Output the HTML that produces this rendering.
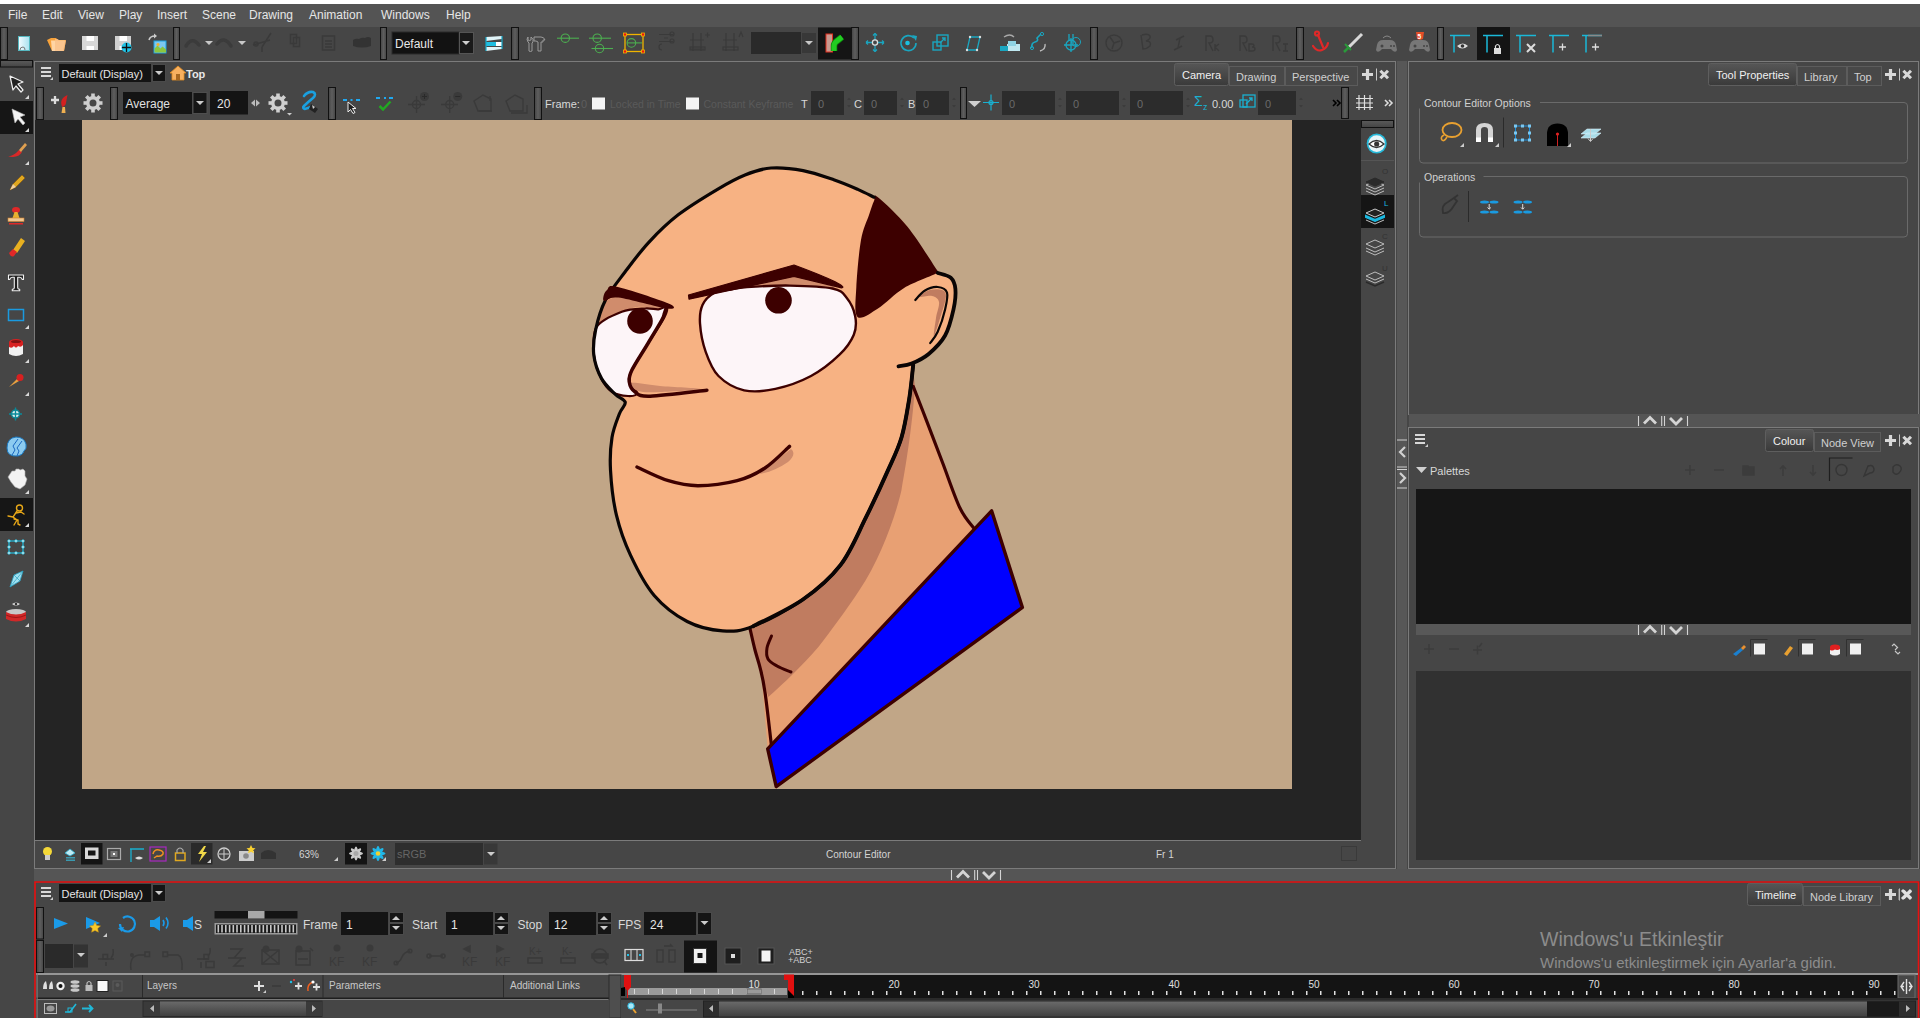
<!DOCTYPE html>
<html><head><meta charset="utf-8">
<style>
*{margin:0;padding:0;box-sizing:border-box}
html,body{width:1920px;height:1018px;overflow:hidden;background:#464646;font-family:"Liberation Sans",sans-serif;font-size:12px;color:#e0e0e0}
.a{position:absolute}
.menu span{position:absolute;top:4px;font-size:12px;color:#e6e6e6}
.pb{position:absolute;border:1px solid #7b7b7b;background:#464646}
.dd{position:absolute;background:#151515;border:1px solid #2a2a2a;color:#e0e0e0;font-size:12px}
.ddb{position:absolute;background:#1c1c1c;border:1px solid #5a5a5a}
.ddb:after{content:"";position:absolute;left:50%;top:50%;margin:-2px 0 0 -5px;border-left:5px solid transparent;border-right:5px solid transparent;border-top:5px solid #d0d0d0}
.handle{position:absolute;background:linear-gradient(#5a5a5a,#404040);border:2px solid #111;border-radius:1px}
.tab{position:absolute;font-size:12px;color:#d8d8d8;text-align:center;border:1px solid #555;border-bottom:none;background:#4e4e4e}
.tab.on{background:linear-gradient(#5a5a5a,#3c3c3c);color:#f0f0f0}
.field{position:absolute;background:#2a2a2a;color:#777;font-size:11px}
</style></head><body>
<!-- white strip -->
<div class="a" style="left:0;top:0;width:1920px;height:4px;background:#fff"></div>
<!-- menubar -->
<div class="a menu" style="left:0;top:4px;width:1920px;height:23px;background:#545454">
<span style="left:8px">File</span><span style="left:42px">Edit</span><span style="left:78px">View</span><span style="left:119px">Play</span><span style="left:157px">Insert</span><span style="left:202px">Scene</span><span style="left:249px">Drawing</span><span style="left:309px">Animation</span><span style="left:381px">Windows</span><span style="left:446px">Help</span>
</div>
<!-- toolbar -->
<div class="a" style="left:0;top:27px;width:1920px;height:34px;background:#464646"></div>

<!-- camera panel -->
<div class="pb" style="left:34px;top:61px;width:1362px;height:808px"></div>
<div class="a" style="left:35px;top:120px;width:1326px;height:720px;background:#242424"></div>
<!--FACE--><svg class="a" style="left:0;top:0" width="1920" height="1018" viewBox="0 0 1920 1018">
<defs><clipPath id="cv"><rect x="82" y="120" width="1210" height="669"/></clipPath></defs>
<g clip-path="url(#cv)">
<rect x="82" y="120" width="1210" height="669" fill="#c1a687"/>
<path d="M913,360 L913,386 C927,421.8 942.7,463 956,500 C962,512 968,521 976,530 L767.7,748.9 L762,681.3 L751,629.4 L740,627 L700,500Z" fill="#e8a073"/>
<path d="M913,370 L915,386 C912,430 905,470 901.5,490 C896,515 880,560 859.5,590 C845,612 830,632 818.6,646.7 C800,668 785,682 768.3,697 L760,668 L751,629.4 L740,600 L860,450Z" fill="#c07c60"/>
<path d="M749.7,627.3 C750.6,631.1 753.2,643.1 755.0,650.0 C756.8,656.9 758.6,661.6 760.3,668.6 C762.0,675.6 763.1,679.5 765.0,692.2 C766.9,704.9 770.3,736.2 771.4,745.0" fill="none" stroke="#3d0000" stroke-width="3.2" stroke-linecap="round"/>
<path d="M913.2,386.4 C915.5,392.3 922.1,409.0 927.0,421.8 C931.9,434.6 937.2,448.6 942.7,463.0 C948.2,477.4 954.8,497.4 960.1,508.3 C965.4,519.2 971.9,525.3 974.3,528.7" fill="none" stroke="#3d0000" stroke-width="3.2" stroke-linecap="round"/>
<path d="M771.5,636.0 C770.8,638.0 767.6,644.2 767.0,648.0 C766.4,651.8 766.3,656.0 768.0,659.0 C769.7,662.0 773.2,663.8 777.0,666.0 C780.8,668.2 788.7,671.0 791.0,672.0" fill="none" stroke="#3d0000" stroke-width="3" stroke-linecap="round"/>
<path d="M991.6,510.8 L1022.4,607.4 L776.2,786.6 L767.7,748.9Z" fill="#0000ff" stroke="#3d0000" stroke-width="3.4" stroke-linejoin="round"/>
<path d="M771.0,168.0 C780.7,167.3 792.5,168.6 803.1,170.6 C813.7,172.6 825.3,176.9 834.4,180.0 C843.5,183.1 851.2,186.5 857.8,189.4 C864.4,192.3 866.1,191.4 874.0,197.2 C881.9,203.0 894.4,211.4 905.0,224.0 C915.6,236.6 930.5,264.2 937.8,272.8 C945.1,281.4 945.6,273.2 948.6,275.7 C951.6,278.1 954.5,282.2 955.5,287.5 C956.5,292.8 956.3,299.0 954.5,307.2 C952.7,315.4 948.3,329.6 944.7,336.6 C941.1,343.6 938.1,344.4 932.9,349.1 C927.6,353.8 917.1,356.6 913.2,364.8 C909.3,373.0 911.2,386.1 909.3,398.2 C907.3,410.3 905.1,425.4 901.5,437.5 C897.9,449.6 893.7,457.5 887.7,470.9 C881.8,484.3 873.6,502.0 865.8,517.7 C857.9,533.4 851.1,551.3 840.6,564.9 C830.1,578.5 817.5,589.3 802.9,599.5 C788.3,609.7 766.6,621.0 753.2,626.2 C739.8,631.4 733.6,631.7 722.6,630.9 C711.6,630.1 698.6,627.4 687.2,621.5 C675.8,615.6 663.6,606.5 654.2,595.5 C644.8,584.5 636.9,568.8 630.6,555.4 C624.3,542.0 619.9,529.6 616.5,515.4 C613.1,501.2 611.2,483.0 610.5,470.0 C609.8,457.0 610.5,446.8 612.0,437.5 C613.5,428.2 617.1,419.9 619.3,414.0 C621.5,408.1 625.9,405.5 625.2,402.2 C624.6,398.9 619.3,398.2 615.4,394.3 C611.5,390.4 605.2,385.2 601.6,378.6 C598.0,372.1 594.8,363.2 593.8,355.0 C592.8,346.8 593.8,338.7 595.7,329.5 C597.7,320.3 600.6,309.6 605.5,300.0 C610.4,290.4 618.0,281.4 625.2,271.8 C632.4,262.2 640.0,251.8 648.8,242.3 C657.6,232.8 666.8,223.6 678.2,214.8 C689.7,206.0 706.4,195.9 717.5,189.3 C728.6,182.7 736.1,178.6 745.0,175.0 C753.9,171.4 761.3,168.7 771.0,168.0Z" fill="#f7b283"/>
<path d="M918.0,297.0 C917.7,296.0 926.0,291.2 930.0,290.0 C934.0,288.8 939.3,289.0 942.0,290.0 C944.7,291.0 946.0,292.3 946.0,296.0 C946.0,299.7 944.0,305.3 942.0,312.0 C940.0,318.7 935.0,335.0 934.0,336.0 C933.0,337.0 935.2,323.7 936.0,318.0 C936.8,312.3 939.7,305.7 939.0,302.0 C938.3,298.3 935.5,296.8 932.0,296.0 C928.5,295.2 918.3,298.0 918.0,297.0Z" fill="#c07c60"/>
<path d="M608.0,300.0 C614.7,295.5 630.3,296.7 640.0,298.0 C649.7,299.3 662.3,304.3 666.0,308.0 C669.7,311.7 665.5,320.2 662.0,320.0 C658.5,319.8 652.0,308.3 645.0,307.0 C638.0,305.7 627.5,309.0 620.0,312.0 C612.5,315.0 602.0,327.0 600.0,325.0 C598.0,323.0 601.3,304.5 608.0,300.0Z" fill="#d08c6c"/>
<path d="M712.0,295.0 C719.3,293.3 746.3,285.3 760.0,282.0 C773.7,278.7 784.0,275.2 794.0,275.0 C804.0,274.8 813.3,278.8 820.0,281.0 C826.7,283.2 837.3,287.2 834.0,288.0 C830.7,288.8 812.3,286.2 800.0,286.0 C787.7,285.8 774.0,286.0 760.0,287.0 C746.0,288.0 724.0,290.7 716.0,292.0 C708.0,293.3 704.7,296.7 712.0,295.0Z" fill="#d08c6c"/>
<path d="M596.7,326.8 C601.3,319.6 613.8,314.9 621.8,311.8 C629.8,308.8 638.9,308.9 645.0,308.5 C651.1,308.1 654.9,309.6 658.5,309.3 C662.1,309.0 666.0,305.4 666.9,306.8 C667.8,308.2 667.3,311.6 664.0,318.0 C660.7,324.4 652.3,336.3 647.0,345.0 C641.7,353.7 635.0,363.8 632.0,370.0 C629.0,376.2 628.2,378.2 629.0,382.0 C629.8,385.8 637.2,390.7 637.0,393.0 C636.8,395.3 632.2,396.2 628.0,396.0 C623.8,395.8 616.5,395.0 612.0,392.0 C607.5,389.0 604.0,384.2 601.0,378.0 C598.0,371.8 594.7,363.5 594.0,355.0 C593.3,346.5 592.1,334.0 596.7,326.8Z" fill="#fdf5f8" stroke="#3d0000" stroke-width="2.2"/>
<path d="M714.0,293.0 C718.6,290.4 724.5,290.5 730.0,289.5 C735.5,288.5 737.0,287.6 747.0,287.0 C757.0,286.4 775.5,285.4 789.7,285.6 C803.9,285.9 822.9,286.5 832.4,288.5 C841.9,290.5 842.8,293.1 846.6,297.7 C850.4,302.3 854.0,310.0 855.2,316.2 C856.4,322.4 856.4,328.3 853.8,334.7 C851.2,341.1 846.6,347.8 839.5,354.7 C832.4,361.6 821.7,370.3 811.0,376.0 C800.3,381.7 786.5,386.5 775.4,388.9 C764.2,391.3 753.6,392.4 744.1,390.3 C734.6,388.2 724.9,382.4 718.5,376.0 C712.1,369.6 708.8,360.6 705.7,351.8 C702.6,343.0 700.5,331.2 700.0,323.4 C699.5,315.6 700.2,310.1 702.5,305.0 C704.8,299.9 709.4,295.6 714.0,293.0Z" fill="#fdf5f8" stroke="#3d0000" stroke-width="2.4"/>
<path d="M631.0,383.0 C634.7,382.2 648.5,385.0 660.0,386.0 C671.5,387.0 700.0,388.0 700.0,389.0 C700.0,390.0 670.3,391.7 660.0,392.0 C649.7,392.3 642.8,392.5 638.0,391.0 C633.2,389.5 627.3,383.8 631.0,383.0Z" fill="#d08c6c"/>
<path d="M877.9,197.2 C883.4,201.5 897.5,214.5 907.3,226.6 C917.1,238.7 931.7,262.1 936.8,269.8 C941.9,277.5 943.2,269.8 937.8,272.8 C932.3,275.8 914.1,282.1 904.1,288.0 C894.1,293.9 885.8,303.7 878.0,308.5 C870.2,313.3 861.1,320.4 857.5,316.9 C853.9,313.4 855.7,300.3 856.3,287.5 C856.9,274.7 858.9,252.1 861.0,240.0 C863.1,227.9 866.8,221.5 869.0,215.0 C871.2,208.5 872.5,204.0 874.0,201.0 C875.5,198.0 872.4,192.9 877.9,197.2Z" fill="#3d0000"/>
<path d="M874.0,197.2 C871.3,195.9 864.4,192.3 857.8,189.4 C851.2,186.5 843.5,183.1 834.4,180.0 C825.3,176.9 813.7,172.6 803.1,170.6 C792.5,168.6 780.7,167.3 771.0,168.0 C761.3,168.7 753.9,171.4 745.0,175.0 C736.1,178.6 728.6,182.7 717.5,189.3 C706.4,195.9 689.7,206.0 678.2,214.8 C666.8,223.6 657.6,232.8 648.8,242.3 C640.0,251.8 632.4,262.2 625.2,271.8 C618.0,281.4 610.4,290.4 605.5,300.0 C600.6,309.6 597.7,320.3 595.7,329.5 C593.8,338.7 592.8,346.8 593.8,355.0 C594.8,363.2 598.0,372.1 601.6,378.6 C605.2,385.2 611.5,390.4 615.4,394.3 C619.3,398.2 624.6,398.9 625.2,402.2 C625.9,405.5 621.5,408.1 619.3,414.0 C617.1,419.9 613.5,428.2 612.0,437.5 C610.5,446.8 609.8,457.0 610.5,470.0 C611.2,483.0 613.1,501.2 616.5,515.4 C619.9,529.6 624.3,542.0 630.6,555.4 C636.9,568.8 644.8,584.5 654.2,595.5 C663.6,606.5 675.8,615.6 687.2,621.5 C698.6,627.4 711.6,630.1 722.6,630.9 C733.6,631.7 739.8,631.4 753.2,626.2 C766.6,621.0 788.3,609.7 802.9,599.5 C817.5,589.3 830.1,578.5 840.6,564.9 C851.1,551.3 857.9,533.4 865.8,517.7 C873.6,502.0 881.8,484.3 887.7,470.9 C893.7,457.5 897.9,449.6 901.5,437.5 C905.1,425.4 907.3,410.3 909.3,398.2 C911.2,386.1 912.6,370.4 913.2,364.8" fill="none" stroke="#0a0505" stroke-width="3.2" stroke-linecap="round"/>
<path d="M753.2,626.2 C761.5,621.8 788.3,609.7 802.9,599.5 C817.5,589.3 830.1,578.5 840.6,564.9 C851.1,551.3 857.9,533.4 865.8,517.7 C873.6,502.0 881.8,484.3 887.7,470.9 C893.7,457.5 897.9,449.6 901.5,437.5 C905.1,425.4 907.3,410.3 909.3,398.2 C911.2,386.1 912.6,370.4 913.2,364.8" fill="none" stroke="#0a0505" stroke-width="3.9" stroke-linecap="round"/>
<path d="M937.8,273.0 C939.9,273.8 947.8,275.0 950.7,277.7 C953.6,280.4 954.9,283.7 955.4,289.0 C955.9,294.3 955.2,301.6 953.5,309.4 C951.8,317.1 949.3,328.0 945.1,335.5 C940.9,343.0 934.0,349.5 928.4,354.2 C922.8,358.9 916.6,361.5 911.6,363.5 C906.6,365.5 900.7,365.8 898.5,366.3" fill="none" stroke="#0a0505" stroke-width="3.8" stroke-linecap="round"/>
<path d="M915.3,300.0 C916.8,298.4 920.9,292.9 924.6,290.7 C928.3,288.5 934.0,286.7 937.7,287.0 C941.4,287.3 945.8,288.9 947.0,292.6 C948.2,296.3 946.6,302.9 945.1,309.4 C943.6,315.9 940.2,326.2 937.7,331.8 C935.2,337.4 931.5,341.1 930.2,343.0" fill="none" stroke="#0a0505" stroke-width="2.2" stroke-linecap="round"/>
<path d="M603.4,296.8 C603.7,295.0 604.8,291.7 607.0,290.0 C609.2,288.3 606.5,284.5 616.7,286.7 C627.0,288.9 660.1,299.8 668.5,303.4 C676.9,307.0 675.2,309.5 666.9,308.5 C658.5,307.5 628.7,298.9 618.4,297.6 C608.1,296.4 607.5,301.1 605.0,301.0 C602.5,300.9 603.1,298.6 603.4,296.8Z" fill="#3d0000"/>
<path d="M688.5,295 L794,265 C845,284 845,287.5 841.5,287.8 L794,276.4 L689,299.2Z" fill="#3d0000" stroke="#3d0000" stroke-width="1.2" stroke-linejoin="round"/>
<path d="M667.0,305.5 C666.6,306.8 665.4,310.6 664.5,313.0 C663.6,315.4 664.7,314.8 661.8,320.1 C658.9,325.4 652.0,336.6 647.0,345.0 C642.0,353.4 634.8,364.1 631.8,370.3 C628.8,376.5 628.8,378.4 629.3,382.0 C629.8,385.6 631.6,389.6 635.1,392.0 C638.6,394.4 638.2,396.5 650.2,396.2 C662.2,395.9 697.5,391.3 706.9,390.3" fill="none" stroke="#3d0000" stroke-width="3.5" stroke-linecap="round"/>
<path d="M762,468 C775,462 783,455 791,449 C795,452 794,457 788,462 C780,468 770,472 760,474Z" fill="#d08c6c"/>
<path d="M637.0,467.0 C642.2,469.3 658.2,477.6 668.4,480.7 C678.5,483.8 686.4,485.7 697.9,485.7 C709.4,485.7 726.0,483.6 737.2,480.7 C748.4,477.8 756.3,473.7 765.0,468.0 C773.7,462.3 785.4,450.0 789.5,446.4" fill="none" stroke="#3d0000" stroke-width="3.4" stroke-linecap="round"/>
<circle cx="640" cy="321" r="12.8" fill="#3d0000"/>
<circle cx="778.5" cy="300.3" r="13.3" fill="#3d0000"/>
</g></svg><!--/FACE-->
<div class="a" style="left:35px;top:840px;width:1326px;height:1px;background:#7b7b7b"></div>

<!-- splitter strip -->
<div class="a" style="left:1397px;top:61px;width:10px;height:808px;background:#575757"></div>

<!-- right top panel -->
<div class="pb" style="left:1408px;top:61px;width:511px;height:354px"></div>
<!-- right colour panel -->
<div class="pb" style="left:1408px;top:427px;width:511px;height:442px"></div>
<div class="a" style="left:1416px;top:490px;width:1495px;height:134px;background:#161616;width:495px"></div>
<div class="a" style="left:1416px;top:671px;width:495px;height:189px;background:#313131"></div>

<!-- timeline panel -->
<div class="a" style="left:34px;top:881px;width:1886px;height:137px;border:1px solid #d01010;border-bottom:none;background:#4a4a4a"></div>
<!--TB--><!-- toolbar icons -->
<svg class="a" style="left:0;top:0" width="1920" height="62" viewBox="0 0 1920 62">
<defs>
<linearGradient id="hg" x1="0" x2="1"><stop offset="0" stop-color="#444"/><stop offset=".5" stop-color="#5e5e5e"/><stop offset="1" stop-color="#444"/></linearGradient>
<linearGradient id="tabg" x1="0" y1="0" x2="0" y2="1"><stop offset="0" stop-color="#565656"/><stop offset="1" stop-color="#3a3a3a"/></linearGradient>
<linearGradient id="docg" x1="0" x2="1"><stop offset="0" stop-color="#f4fbff"/><stop offset="1" stop-color="#a8e2f0"/></linearGradient>
</defs>
<!-- handles -->
<g fill="url(#hg)" stroke="#111" stroke-width="1">
<rect x="0.5" y="27.5" width="7" height="32"/>
<rect x="173.5" y="27.5" width="6" height="32"/>
<rect x="380.5" y="27.5" width="6" height="32"/>
<rect x="511.5" y="27.5" width="7" height="32"/>
<rect x="851.5" y="27.5" width="7" height="32"/>
<rect x="1090.5" y="27.5" width="7" height="32"/>
<rect x="1296.5" y="27.5" width="7" height="32"/>
<rect x="1437.5" y="27.5" width="6" height="32"/>
</g>
<!-- new -->
<rect x="18.5" y="36.5" width="11" height="14" fill="url(#docg)" stroke="#56b8c0" stroke-width="1"/>
<path d="M20,50 q0,-3 3,-3 q2,0 2,3" fill="none" stroke="#777" stroke-width="1"/>
<!-- open folder -->
<path d="M47,40 l4,-2 h5 l2,2 h8 l-2,11 h-12 z" fill="#f7a23a"/>
<path d="M51,40.5 h14 l-2,10.5 h-11 z" fill="#ffd5a4"/>
<path d="M55,39 h3 l1,1.5 h7 l-2,10.5 h-9 z" fill="#f9c08a" opacity=".8"/>
<!-- save -->
<g fill="#d8d8d8"><path d="M82,36 h16 v14 h-16z"/></g>
<rect x="86.5" y="36" width="7.5" height="5" fill="#fff"/><rect x="86.5" y="46" width="7.5" height="4" fill="#fff"/>
<!-- save as -->
<path d="M115,36 h16 v14 h-16z" fill="#d0d0d0"/>
<rect x="119.5" y="36" width="7.5" height="5" fill="#fff"/><rect x="119.5" y="46" width="7.5" height="4" fill="#fff"/>
<circle cx="126.5" cy="47.5" r="5" fill="#1fc4e8"/><path d="M126.5,43 v9 M122,47.5 h9" stroke="#111" stroke-width="1.3"/>
<!-- import -->
<path d="M149,40 q1,-4 6,-4" fill="none" stroke="#ccc" stroke-width="1.5"/><path d="M154,33.5 l3,2.5 -3,2.5z" fill="#ccc"/>
<rect x="154" y="41" width="12" height="12" fill="#7cc8f0" stroke="#1aa0e0" stroke-width="1"/>
<path d="M154.5,52.5 v-4 l3,-3 3,3 2,-2 3.5,3 v3z" fill="#8cc63f"/><circle cx="158" cy="44.5" r="1.6" fill="#f0b030"/>
<!-- undo/redo etc dim -->
<g fill="none" stroke="#3b3b3b" stroke-width="3.5" stroke-linecap="round">
<path d="M186,46 q6,-10 13,-1"/><path d="M217,44 q7,-9 14,2"/>
</g>
<path d="M205,41 h8 l-4,4z M238,41 h8 l-4,4z" fill="#c8c8c8"/>
<g fill="none" stroke="#3a3a3a" stroke-width="1.5">
<path d="M271,33 l-9,14 M253,45 l17,-5 M262,47 v5"/><circle cx="256" cy="44" r="2"/>
<rect x="290.5" y="34.5" width="6" height="9"/><rect x="293.5" y="37.5" width="6" height="9"/>
<rect x="322.5" y="36" width="12" height="14"/><path d="M325,41 h7 M325,44 h7 M325,47 h7"/>
</g>
<path d="M353,40 q3,-2 6,-1 q3,-2 6,-1 q3,-2 6,0 v8 q-9,3 -18,0z" fill="#333"/>
<!-- default dropdown -->
<rect x="392" y="32" width="67" height="22" fill="#121212" stroke="#2a2a2a"/>
<text x="395" y="47.5" font-family="Liberation Sans" font-size="12" fill="#e8e8e8">Default</text>
<rect x="459.5" y="32.5" width="14" height="21" fill="#1a1a1a" stroke="#555"/>
<path d="M462,41 h8 l-4,4z" fill="#d0d0d0"/>
<!-- blue icon -->
<path d="M486,37 l16,-1 v3 l-16,2z" fill="#e0f4f8"/><path d="M486,42 h10 v4 h-10z" fill="#1fbde0"/><path d="M496,42 h6 v4 h-6z" fill="#fff"/><path d="M486,47 l16,0 v2 l-16,2z" fill="#e0f4f8"/>
<path d="M486,37 v14" stroke="#16a8c8" stroke-width="1.2"/><path d="M502,36 v13" stroke="#16a8c8" stroke-width="1.2"/>
<!-- tools -->
<g fill="none" stroke="#9a9a9a" stroke-width="1"><path d="M528,37 v3 q1,1 3,0 v-3 q3,2 2,5 l-1,1 v8 q-2,1 -3,0 v-8 l-1,-1 q-2,-3 0,-5z"/><path d="M534,37 h7 q3,0 4,3 h-2 v2 h-2 v9 h-3 v-9 l-2,-1 h-2z"/></g>
<!-- green pegs -->
<g fill="none" stroke="#4caf50" stroke-width="1.1">
<circle cx="565.3" cy="38.2" r="4.2"/><path d="M557,38.2 h22"/>
<circle cx="597.2" cy="38.2" r="4.2"/><path d="M589,38.2 h22"/>
<circle cx="599.5" cy="48.5" r="4.2"/><path d="M591.5,48.5 h21.5"/>
<circle cx="631.4" cy="42.9" r="4.3"/><path d="M627,42.9 h15"/>
</g>
<rect x="625" y="34.5" width="18" height="17" fill="none" stroke="#f0b400" stroke-width="1.3"/>
<g fill="#f01010" stroke="#f0b400" stroke-width=".8"><rect x="623.5" y="33" width="3" height="3"/><rect x="641.5" y="33" width="3" height="3"/><rect x="623.5" y="50" width="3" height="3"/><rect x="641.5" y="50" width="3" height="3"/></g>
<!-- dim peg icons -->
<g fill="none" stroke="#3a3a3a" stroke-width="1.2">
<path d="M659,34.5 h14 M659,41.5 h14 M664,38 h4"/><circle cx="672" cy="34" r="2"/><circle cx="672" cy="41" r="2"/><path d="M662,44 q-3,0 -3,3 q0,3 3,3"/>
<path d="M693,33 v18 M701,33 v18 M690,40 h14 M690,49 h14 M705,35 h5 M707.5,32.5 v5"/><rect x="690" y="47" width="15" height="3"/>
<path d="M726,33 v18 M734,33 v18 M723,40 h14"/><rect x="723" y="47" width="15" height="3"/><path d="M739,37 l2,-5 l2,5"/>
</g>
<!-- field -->
<rect x="751" y="32" width="50" height="22" fill="#2a2a2a"/>
<rect x="802" y="33" width="14" height="20" fill="#383838"/>
<path d="M805,41 h8 l-4,4z" fill="#c8c8c8"/>
<!-- black box -->
<rect x="818" y="27.5" width="34" height="32" fill="#151515"/>
<rect x="826" y="34" width="6.5" height="18" fill="#c89a90" stroke="#e03020" stroke-width="1"/>
<path d="M834,51 v-5 q0,-3 3,-5 l5,-4" fill="none" stroke="#0a8a0a" stroke-width="6.5" stroke-linecap="butt"/>
<path d="M834,51 v-5 q0,-3 3,-5 l5,-4" fill="none" stroke="#22cc22" stroke-width="5"/>
<!-- transform tools cyan -->
<g fill="none" stroke="#1aa6c0" stroke-width="1.3">
<path d="M866,42.5 h18 M875,33.5 v18"/><circle cx="875" cy="42.5" r="2.6" fill="#454545" stroke="#ddd"/>
<path d="M866,42.5 l2,-2 M866,42.5 l2,2 M884,42.5 l-2,-2 M884,42.5 l-2,2 M875,33.5 l-2,2 M875,33.5 l2,2 M875,51.5 l-2,-2 M875,51.5 l2,-2"/>
</g>
<g fill="none" stroke="#1aa6c0" stroke-width="1.6"><path d="M914,38 a7.5,7.5 0 1,0 2,5"/></g><path d="M912,35 l5,1 -1,5z" fill="#1aa6c0"/><circle cx="907.5" cy="43" r="2.3" fill="#1ac0e0"/>
<g fill="none" stroke="#1aa6c0" stroke-width="1.4"><rect x="933" y="42" width="8" height="8"/><rect x="937" y="35" width="11" height="11"/><path d="M940,43 l5,-5 M942,38 h3 v3"/></g>
<path d="M970,37 l10,0 l-3,13 l-10,0z" fill="none" stroke="#1aa6c0" stroke-width="1.3"/><g fill="#ddd"><circle cx="970" cy="37" r="1.2"/><circle cx="980" cy="37" r="1.2"/><circle cx="977" cy="50" r="1.2"/><circle cx="967" cy="50" r="1.2"/></g>
<path d="M1004,37 q6,-4 10,0" fill="none" stroke="#aaa" stroke-width="1.4"/>
<path d="M1007,44 h13 v7 h-13z" fill="#bfe8f0"/><path d="M1000,46 h8 v5 h-8z" fill="#1aa6c0"/><path d="M1008,41 h8 v5 h-8z" fill="#8fd4e4"/>
<path d="M1032,48 q-1,-5 3,-6 q4,-1 2,-4 l4,-4" fill="none" stroke="#1aa6c0" stroke-width="1.6"/><circle cx="1032" cy="48" r="1.6" fill="none" stroke="#1aa6c0"/><circle cx="1042" cy="34" r="1.6" fill="none" stroke="#1aa6c0"/><path d="M1045,44 q1,5 -5,7" fill="none" stroke="#bbb" stroke-width="1.4"/>
<g fill="none" stroke="#1aa6c0" stroke-width="1.3"><circle cx="1071" cy="45" r="5"/><path d="M1064,45 h14 M1071,38 v14 M1073,34 v10 M1069,34 v6"/><circle cx="1076" cy="42" r="4.5" stroke-width="1"/></g>
<!-- dim R icons -->
<g fill="none" stroke="#3a3a3a" stroke-width="1.4">
<circle cx="1114" cy="43" r="8"/><path d="M1114,43 l-4,-6 M1114,43 l6,-2 M1114,43 l-2,6"/>
<path d="M1142,35 q6,-2 8,1 q1,3 -4,5 q6,0 4,5 q-3,3 -7,3 l-2,-14" />
<path d="M1176,40 l8,-4 M1180,38 l-2,10 M1174,50 l8,-4"/>
<path d="M1206,51 v-15 h4 q3,0 3,4 q0,3 -4,3 l4,8 M1215,44 v7 M1215,47 l4,-3 M1215,47 l4,4"/>
<path d="M1240,51 v-15 h4 q3,0 3,4 q0,3 -4,3 l4,8 M1249,44 h3 q2,0 2,2 q0,1 -2,1 q3,0 3,2 q0,2 -3,2 h-3z"/>
<path d="M1273,51 v-15 h4 q3,0 3,4 q0,3 -4,3 l4,8 M1283,44 h5 M1285.5,44 v7 M1283,51 h5"/>
</g>
<!-- red anchor -->
<g fill="none" stroke="#e02828" stroke-width="2.2" stroke-linecap="round"><path d="M1318,35 l5,12 M1313,46 q4,6 9,4 q5,-2 6,-7"/><circle cx="1317" cy="33.5" r="2"/></g>
<!-- sword -->
<path d="M1362,34 l-13,13" stroke="#d8d8d8" stroke-width="3"/><path d="M1349,47 l-5,5" stroke="#2a9a3a" stroke-width="2.5"/><path d="M1345,44 l6,6" stroke="#2a9a3a" stroke-width="2"/>
<!-- gamepads -->
<path d="M1377,45 q1,-5 6,-5 h7 q5,0 6,5 l1,5 q-1,3 -4,1 l-2,-2 h-9 l-2,2 q-3,2 -4,-1z" fill="#777"/><path d="M1383,38 q4,-4 8,0" fill="none" stroke="#888" stroke-width="1"/>
<g fill="#454545"><circle cx="1382" cy="46" r="1.5"/><circle cx="1391" cy="46" r="1"/><circle cx="1394" cy="46" r="1"/></g>
<path d="M1410,45 q1,-5 6,-5 h7 q5,0 6,5 l1,5 q-1,3 -4,1 l-2,-2 h-9 l-2,2 q-3,2 -4,-1z" fill="#777"/>
<g fill="#454545"><circle cx="1415" cy="46" r="1.5"/><circle cx="1424" cy="46" r="1"/><circle cx="1427" cy="46" r="1"/></g>
<path d="M1416,32 h8 l-1,7 l-3,1 l-3,-1z" fill="#e44d26"/><text x="1417.5" y="38.5" font-family="Liberation Sans" font-size="6.5" font-weight="bold" fill="#fff">5</text>
<!-- peg display icons -->
<rect x="1477" y="27" width="33" height="33" fill="#141414"/>
<g stroke="#1ab8d8" stroke-width="1.5" fill="none">
<path d="M1450,35.5 h20 M1454,35.5 v17"/><path d="M1483,35.5 h20 M1487,35.5 v17"/><path d="M1516,35.5 h20 M1520,35.5 v17"/><path d="M1549,35.5 h20 M1553,35.5 v17"/><path d="M1582,35.5 h20 M1586,35.5 v17"/>
</g>
<path d="M1588,35.5 h14" stroke="#8a8a8a" stroke-width="1.5"/>
<path d="M1457,46 q6,-5 11,0 q-6,5 -11,0z" fill="#ddd"/><circle cx="1462.5" cy="46" r="1.8" fill="#333"/>
<path d="M1494,48 h7 v6 h-7z" fill="#ddd"/><path d="M1495.5,48 v-2 q2,-3 4,0 v2" fill="none" stroke="#ddd" stroke-width="1.2"/>
<path d="M1527,44 l8,8 M1535,44 l-8,8" stroke="#ddd" stroke-width="2"/>
<path d="M1559,47 h7 M1562.5,43.5 v7 M1592,47 h7 M1595.5,43.5 v7" stroke="#ddd" stroke-width="1.3"/>
</svg>
<!--/TB-->
<!--CH--><!-- camera header + props -->
<svg class="a" style="left:0;top:60px" width="1400" height="62" viewBox="0 60 1400 62">
<g fill="url(#hg)" stroke="#111" stroke-width="1">
<rect x="36.5" y="87.5" width="7" height="32"/>
<rect x="110.5" y="87.5" width="7" height="32"/>
<rect x="328.5" y="87.5" width="7" height="32"/>
<rect x="534.5" y="87.5" width="7" height="32"/>
<rect x="960.5" y="87.5" width="6" height="31"/>
<rect x="1341.5" y="87.5" width="7" height="31"/>
</g>
<!-- hamburger -->
<g fill="#d8d8d8"><rect x="41" y="67" width="10" height="2"/><rect x="41" y="71" width="10" height="2"/><rect x="41" y="75" width="10" height="2"/></g>
<path d="M53,77 v3 h-3z" fill="#ccc"/>
<rect x="59" y="64" width="92" height="18" fill="#141414"/>
<text x="61.5" y="77.5" font-family="Liberation Sans" font-size="11" fill="#e6e6e6">Default (Display)</text>
<rect x="152.5" y="64.5" width="13" height="17" fill="#151515" stroke="#4a4a4a"/>
<path d="M155,71 h8 l-4,4z" fill="#ccc"/>
<!-- house -->
<path d="M170,73 l8,-7 l8,7 h-2 v7 h-12 v-7z" fill="#f7b060" stroke="#e08a20" stroke-width=".8"/>
<rect x="176" y="74" width="4" height="6" fill="#a86820"/>
<text x="186" y="77.5" font-family="Liberation Sans" font-size="11" font-weight="bold" fill="#e8e8e8">Top</text>
<!-- + brush -->
<path d="M51,100 h8 M55,96 v8" stroke="#ddd" stroke-width="2.3"/>
<path d="M62,107 q-2,-6 1,-9 q2,-2 4.5,-3 q-1,5 -1.5,8 q-0.5,3 -4,4z" fill="#d42020"/>
<path d="M61.5,113 l1,-6 l2.5,0 l0.5,6z" fill="#f0b050"/>
<!-- gear -->
<g transform="translate(93,103)"><circle r="5.2" fill="none" stroke="#cfcfcf" stroke-width="3.4"/><g fill="#cfcfcf"><rect x="-1.8" y="-9.5" width="3.6" height="4" transform="rotate(0)"/><rect x="-1.8" y="-9.5" width="3.6" height="4" transform="rotate(45)"/><rect x="-1.8" y="-9.5" width="3.6" height="4" transform="rotate(90)"/><rect x="-1.8" y="-9.5" width="3.6" height="4" transform="rotate(135)"/><rect x="-1.8" y="-9.5" width="3.6" height="4" transform="rotate(180)"/><rect x="-1.8" y="-9.5" width="3.6" height="4" transform="rotate(225)"/><rect x="-1.8" y="-9.5" width="3.6" height="4" transform="rotate(270)"/><rect x="-1.8" y="-9.5" width="3.6" height="4" transform="rotate(315)"/></g></g>
<!-- average dropdown -->
<rect x="123" y="92" width="69" height="22" fill="#141414"/>
<text x="125.5" y="107.5" font-family="Liberation Sans" font-size="12" fill="#e0e0e0">Average</text>
<rect x="193" y="92.5" width="14" height="21" fill="#161616" stroke="#4e4e4e"/>
<path d="M196,101 h8 l-4,4z" fill="#ccc"/>
<rect x="210" y="91" width="38" height="23.5" fill="#141414"/>
<text x="217" y="108" font-family="Liberation Sans" font-size="12" fill="#e6e6e6">20</text>
<path d="M255,99.5 l-4,3.5 4,3.5z M256,99.5 l4,3.5 -4,3.5z" fill="#bbb"/>
<g transform="translate(278,103)"><circle r="5.2" fill="none" stroke="#d0d0d0" stroke-width="3.4"/><g fill="#d0d0d0"><rect x="-1.8" y="-9.5" width="3.6" height="4" transform="rotate(0)"/><rect x="-1.8" y="-9.5" width="3.6" height="4" transform="rotate(45)"/><rect x="-1.8" y="-9.5" width="3.6" height="4" transform="rotate(90)"/><rect x="-1.8" y="-9.5" width="3.6" height="4" transform="rotate(135)"/><rect x="-1.8" y="-9.5" width="3.6" height="4" transform="rotate(180)"/><rect x="-1.8" y="-9.5" width="3.6" height="4" transform="rotate(225)"/><rect x="-1.8" y="-9.5" width="3.6" height="4" transform="rotate(270)"/><rect x="-1.8" y="-9.5" width="3.6" height="4" transform="rotate(315)"/></g></g>
<path d="M287,113 h5 l-2.5,2.5z" fill="#ccc"/>
<!-- blue brush -->
<path d="M304,96 q4,-5 9,-4 q4,2 0,6 q-5,4 -9,8 q-2,2 1,3 l6,-2" fill="none" stroke="#1aa0e0" stroke-width="2.6" stroke-linecap="round"/>
<path d="M311,104 l7,5 l-3,4 l-6,-4z" fill="#222"/><path d="M312,105 l3,2 -2,2z" fill="#ccc"/>
<!-- dashed + cursor -->
<path d="M343,100 h4 M350.5,100 h2 M356,100 h4" stroke="#20a8f0" stroke-width="2"/>
<path d="M348,102 v10 l2.5,-2.5 l2.5,4 l2,-1 l-2.5,-4 h3.5z" fill="#222" stroke="#eee" stroke-width="1"/>
<path d="M376,98 h4 M384,98 h2 M389,98 h4" stroke="#20a8f0" stroke-width="2"/>
<path d="M379.5,106 l3.5,3.5 l7.5,-8" fill="none" stroke="#22a822" stroke-width="2.5"/>
<!-- dim icons -->
<g fill="none" stroke="#3a3a3a" stroke-width="1.3"><circle cx="416.5" cy="104.5" r="4"/><path d="M408,104.5 h17 M416.5,96 v17"/><circle cx="449.7" cy="104.5" r="4"/><path d="M441,104.5 h17 M449.7,96 v17"/></g>
<circle cx="424.5" cy="96.5" r="4.5" fill="#3a3a3a"/><circle cx="457.7" cy="96.5" r="4.5" fill="#3a3a3a"/>
<path d="M422,96.5 h5 M424.5,94 v5 M455.2,96.5 h5" stroke="#2a2a2a" stroke-width="1"/>
<g fill="none" stroke="#3a3a3a" stroke-width="1.4"><path d="M474,101 l9,-6 l8,4 v12 h-13z"/><path d="M479,111 h13 M490,96 v5"/><path d="M506,101 l9,-6 l8,4 v12 h-13z"/><path d="M511,113 h16 v-8"/></g>
<text x="545" y="107.5" font-family="Liberation Sans" font-size="11" fill="#d8d8d8">Frame:</text>
<text x="581" y="107.5" font-family="Liberation Sans" font-size="11" fill="#5e5e5e">0</text>
<rect x="592" y="97.5" width="13" height="12" fill="#f4f4f4"/>
<text x="610" y="107.5" font-family="Liberation Sans" font-size="10.5" fill="#5a5a5a">Locked in Time</text>
<rect x="686" y="97.5" width="13" height="12" fill="#f4f4f4"/>
<text x="703.5" y="107.5" font-family="Liberation Sans" font-size="10.5" fill="#5a5a5a">Constant Keyframe</text>
<text x="801" y="107.5" font-family="Liberation Sans" font-size="11" fill="#d8d8d8">T</text>
<text x="854" y="107.5" font-family="Liberation Sans" font-size="11" fill="#d8d8d8">C</text>
<text x="908" y="107.5" font-family="Liberation Sans" font-size="11" fill="#d8d8d8">B</text>
<g fill="#2c2c2c"><rect x="811" y="91" width="33" height="24"/><rect x="864" y="91" width="33" height="24"/><rect x="916" y="91" width="33" height="24"/><rect x="1002" y="91" width="53" height="24"/><rect x="1066" y="91" width="53" height="24"/><rect x="1130" y="91" width="53" height="24"/><rect x="1258" y="91" width="38" height="24"/></g>
<g font-family="Liberation Sans" font-size="11" fill="#6a6a6a"><text x="818" y="107.5">0</text><text x="871" y="107.5">0</text><text x="923" y="107.5">0</text><text x="1009" y="107.5">0</text><text x="1073" y="107.5">0</text><text x="1137" y="107.5">0</text><text x="1265" y="107.5">0</text></g>
<g fill="#3c3c3c"><path d="M847,100 l2,-2.5 2,2.5z M847,105 l2,2.5 2,-2.5z"/><path d="M900,100 l2,-2.5 2,2.5z M900,105 l2,2.5 2,-2.5z"/><path d="M952,100 l2,-2.5 2,2.5z M952,105 l2,2.5 2,-2.5z"/><path d="M1058,100 l2,-2.5 2,2.5z M1058,105 l2,2.5 2,-2.5z"/><path d="M1122,100 l2,-2.5 2,2.5z M1122,105 l2,2.5 2,-2.5z"/><path d="M1186,100 l2,-2.5 2,2.5z M1186,105 l2,2.5 2,-2.5z"/><path d="M1299,100 l2,-2.5 2,2.5z M1299,105 l2,2.5 2,-2.5z"/></g>
<path d="M968,101 h13 l-6.5,6z" fill="#d0d0d0"/>
<g stroke="#1ab0d0" stroke-width="1.2" fill="none"><path d="M983,102.5 h16 M991,94.5 v16"/><circle cx="991" cy="102.5" r="2"/></g>
<text x="1194" y="106" font-family="Liberation Sans" font-size="14" fill="#1ab0d0">Σ</text><text x="1203" y="110" font-family="Liberation Sans" font-size="9" fill="#1ab0d0">z</text>
<text x="1212" y="107.5" font-family="Liberation Sans" font-size="11" fill="#d8d8d8">0.00</text>
<g stroke="#1ab0d0" stroke-width="1.3" fill="none"><rect x="1240" y="100" width="7" height="7"/><rect x="1243" y="95" width="12" height="12"/><path d="M1246,104 l6,-6 M1249,98 h3 v3"/></g>
<path d="M1333,100 l3,3 -3,3 M1337,100 l3,3 -3,3" fill="none" stroke="#000" stroke-width="1.6"/>
<g stroke="#e0e0e0" stroke-width="1.2"><path d="M1356,98.5 h17 M1356,103 h17 M1356,107.5 h17 M1359,95 v15 M1364.5,95 v15 M1370,95 v15"/></g>
<path d="M1385,100 l3,3 -3,3 M1389,100 l3,3 -3,3" fill="none" stroke="#ddd" stroke-width="1.6"/>
<!-- tabs -->
<rect x="1174.5" y="63.5" width="54" height="22" rx="2" fill="url(#tabg)" stroke="#5e5e5e"/>
<rect x="1229.5" y="66.5" width="55" height="19" fill="#484848" stroke="#5c5c5c"/>
<rect x="1285.5" y="66.5" width="72" height="19" fill="#484848" stroke="#5c5c5c"/>
<text x="1182" y="79" font-family="Liberation Sans" font-size="11" fill="#f0f0f0">Camera</text>
<text x="1236" y="81" font-family="Liberation Sans" font-size="11" fill="#d0d0d0">Drawing</text>
<text x="1292" y="81" font-family="Liberation Sans" font-size="11" fill="#d0d0d0">Perspective</text>
<path d="M1362.0,74.5 h11 M1367.5,69.0 v11" stroke="#d8d8d8" stroke-width="3.2"/><path d="M1376.5,68.5 v12" stroke="#c8c8c8" stroke-width="1"/><path d="M1380.4,70.7 l7.6,7.6 M1388.0,70.7 l-7.6,7.6" stroke="#d8d8d8" stroke-width="3"/>
</svg>
<!--/CH-->
<!--LT--><!-- left toolbar -->
<svg class="a" style="left:0;top:60px" width="34" height="600" viewBox="0 60 34 600">
<rect x="0.5" y="60.5" width="32" height="6.5" fill="url(#hg2)" stroke="#111"/>
<defs><linearGradient id="hg2" x1="0" y1="0" x2="0" y2="1"><stop offset="0" stop-color="#5a5a5a"/><stop offset="1" stop-color="#444"/></linearGradient></defs>
<rect x="0" y="101" width="33" height="33" fill="#161616"/>
<rect x="0" y="498" width="33" height="33" fill="#161616"/>
<g fill="#d8d8d8"><path d="M29,95 v4 h-4z M29,128 v4 h-4z M29,161 v4 h-4z M29,325 v4 h-4z M29,359 v4 h-4z M29,392 v4 h-4z M29,490 v4 h-4z M29,523 v4 h-4z M29,623 v4 h-4z"/></g>
<!-- arrow 1 -->
<path d="M10,76 l13,6 l-5,2 l5,6 l-2,2 l-5,-6 l-3,4z" fill="#222" stroke="#f0f0f0" stroke-width="1.2" stroke-linejoin="round"/>
<!-- arrow 2 -->
<path d="M12,109 l13,6 l-5,2 l5,6 l-2,2 l-5,-6 l-3,4z" fill="#f4f4f4" stroke="#bbb" stroke-width=".6"/>
<!-- brush -->
<path d="M7,156 q6,1 12,-6 l3,2 q-4,7 -15,4z" fill="#d82828"/><path d="M19,150 l6,-7 l2,2 l-6,7z" fill="#e0a050"/>
<!-- pencil -->
<path d="M10,190 l3,-6 l9,-9 l3,3 l-9,9z" fill="#e0a820" stroke="#8a5a10" stroke-width=".7"/><path d="M10,190 l3,-6 l3,3z" fill="#f0d0a0"/>
<!-- stamp -->
<ellipse cx="16" cy="210" rx="4" ry="3" fill="#e02828"/><path d="M14.5,212 h3 l2,6 h-7z" fill="#e8b030"/><rect x="8" y="218" width="16" height="3.5" fill="#f0c890" stroke="#d08030" stroke-width=".6"/><rect x="9" y="223" width="14" height="1.5" fill="#e02828"/>
<!-- eraser -->
<path d="M13,250 l8,-12 l4,3 l-8,12z" fill="#e8b020"/><path d="M9,253 l4,-4 l4,3 l-3,4 q-3,2 -5,-3z" fill="#e02828"/>
<!-- T -->
<path d="M8.5,275 h15 v4.5 h-1.2 q-0.6,-2.2 -2.8,-2.2 h-1.8 v10.5 q0,1.6 2,1.6 v1.3 h-7.4 v-1.3 q2,0 2,-1.6 v-10.5 h-1.8 q-2.2,0 -2.8,2.2 h-1.2z" fill="#1e1e1e" stroke="#f0f0f0" stroke-width="1.1" stroke-linejoin="round"/>
<!-- rect -->
<rect x="8.5" y="309.5" width="15" height="11" fill="none" stroke="#1a9ae0" stroke-width="1.5"/>
<!-- bucket -->
<path d="M9,342 v12 q7,4 14,0 v-12z" fill="#f0f0f0"/><ellipse cx="16" cy="342" rx="7" ry="3" fill="#d82020"/><path d="M9,342 v5 q3,2 5,-1 q2,3 4,0 q3,2 5,-1 v-3z" fill="#d82020"/><ellipse cx="16" cy="341.5" rx="5" ry="1.6" fill="#801010"/>
<!-- dropper -->
<path d="M9,387 l8,-8 l2,2 z" fill="#e8a040"/><circle cx="20" cy="377.5" r="3.5" fill="#d82020"/>
<!-- crosshair -->
<circle cx="15.5" cy="414" r="4" fill="#e0f0f0" stroke="#0a8a9a" stroke-width="1.5"/><path d="M9,414 h13 M15.5,407.5 v13" stroke="#0a8a9a" stroke-width="1.4"/>
<!-- blob -->
<path d="M7,448 q0,-10 9,-11 q8,0 10,7 q1,5 -2,7 q-1,4 -6,5 q-11,1 -11,-8z" fill="#8ccbf0" stroke="#1a78c0" stroke-width="1"/><path d="M12,455 l3,-5 l-2,-4 l5,-7 M17,456 l2,-5 l-2,-3 l5,-7" fill="none" stroke="#1a68c0" stroke-width="1"/>
<!-- hand -->
<path d="M8,477 l4,-6 l3,0 l1,-2 l3,0 l1,1 l3,-1 l2,2 l0,5 l2,3 l-2,6 l-5,4 l-5,-2 l-4,-5z" fill="#f2f2f2" stroke="#aaa" stroke-width=".6"/>
<!-- runner -->
<g fill="none" stroke="#e8a818" stroke-width="1.4" stroke-linecap="round"><circle cx="19.5" cy="508" r="3"/><path d="M17,511 l-4,6 l4,3 l-3,5 M13,517 l-5,-1 M16,513 l5,-1 l3,2 M14,519 l4,1 l0,4 l2,1"/></g>
<!-- bbox -->
<rect x="9" y="541" width="14" height="12" fill="none" stroke="#20b8d8" stroke-width="1.2"/>
<g fill="#e8f8f8" stroke="#20b8d8" stroke-width=".7"><circle cx="9" cy="541" r="1.3"/><circle cx="16" cy="541" r="1.3"/><circle cx="23" cy="541" r="1.3"/><circle cx="9" cy="547" r="1.3"/><circle cx="23" cy="547" r="1.3"/><circle cx="9" cy="553" r="1.3"/><circle cx="16" cy="553" r="1.3"/><circle cx="23" cy="553" r="1.3"/></g>
<!-- crystal -->
<path d="M10,587 l4,-12 l9,-4 l-3,10z" fill="#a0e0f0" stroke="#2aa0c0" stroke-width=".8"/><path d="M10,587 l13,-16 M14,575 l6,6" stroke="#2aa0c0" stroke-width=".7"/>
<!-- eye disc -->
<ellipse cx="16" cy="612" rx="10" ry="3" fill="#c8c8c8"/><path d="M6,612 v7 q10,5 20,0 v-7 q-10,5 -20,0z" fill="#d02828"/><path d="M6,615 q10,5 20,0" stroke="#901010" stroke-width=".8" fill="none"/>
<path d="M12,604 q4,-3 8,0 q-4,3 -8,0z" fill="#ddd"/><circle cx="16" cy="604" r="1.3" fill="#333"/>
</svg>
<!--/LT-->
<!--ST--><!-- right vtoolbar + status -->
<svg class="a" style="left:0;top:0" width="1400" height="890" viewBox="0 0 1400 890">
<rect x="1361" y="120" width="34" height="748" fill="#464646"/>
<rect x="1361.5" y="120.5" width="32" height="7" fill="url(#hg2)" stroke="#111"/>
<rect x="1361" y="160" width="33" height="1" fill="#555"/>
<rect x="1361" y="195" width="33" height="33" fill="#151515"/>
<circle cx="1376.7" cy="143.6" r="10" fill="#26b8d8"/><circle cx="1376.7" cy="143.6" r="8.3" fill="#e8f4f8"/>
<path d="M1369,144 q7.5,-7 15,0 q-7.5,7 -15,0z" fill="#fff" stroke="#333" stroke-width="1.3"/><circle cx="1376.7" cy="144" r="2.6" fill="#333"/>
<g fill="none" stroke="#bdbdbd" stroke-width="1">
<path d="M1366,185 l9,-4 l9,4 l-9,4z M1366,188 l9,4 l9,-4 M1366,191 l9,4 l9,-4"/>
<path d="M1366,217 l9,4 l9,-4 M1366,220 l9,4 l9,-4"/>
<path d="M1366,248 l9,4 l9,-4 M1366,251 l9,4 l9,-4"/>
<path d="M1366,276 l9,-4 l9,4 l-9,4z M1366,279 l9,4 l9,-4"/>
</g>
<path d="M1366,182 l9,-4 l9,4 l-9,4z" fill="#2a2a2a" stroke="#2a2a2a"/>
<path d="M1366,213 l9,-4 l9,4 l-9,4z" fill="#222" stroke="#ccc" stroke-width="1"/>
<path d="M1366,217 l9,4 l9,-4 v-1 l-9,4 l-9,-4z" fill="#1ab8e0" stroke="#1ab8e0" stroke-width="2"/>
<path d="M1366,244 l9,-4 l9,4 l-9,4z" fill="none" stroke="#bdbdbd" stroke-width="1"/>
<path d="M1366,282 l9,4 l9,-4" fill="none" stroke="#2a2a2a" stroke-width="1.5"/>
<g font-family="Liberation Sans" font-size="8"><text x="1382" y="174" fill="#333">O</text><text x="1384" y="206" fill="#1ab8e0">L</text><text x="1382" y="239" fill="#333">C</text><text x="1382" y="271" fill="#333">U</text></g>
<!-- status bar -->
<rect x="1341.5" y="846.5" width="15" height="14" fill="none" stroke="#3a3a3a"/>
<g font-family="Liberation Sans" font-size="10" fill="#d4d4d4"><text x="826" y="857.5">Contour Editor</text><text x="1156" y="857.5">Fr 1</text><text x="299" y="857.5">63%</text></g>
<circle cx="47.5" cy="851.5" r="4.5" fill="#f4d838"/><rect x="45" y="855" width="5" height="5" fill="#ccc"/>
<path d="M65,853 l5,-4 l5,4 l-5,3z" fill="#bfeaf4" stroke="#2ab0d0" stroke-width=".8"/><rect x="66" y="857" width="9" height="1.5" fill="#3a9ab0"/><rect x="66" y="859.5" width="9" height="1.5" fill="#3a9ab0"/>
<rect x="81" y="843" width="21.5" height="21.5" fill="#141414"/><rect x="85" y="847.5" width="13.5" height="11.5" fill="#d8d8d8"/><rect x="88" y="850.5" width="7.5" height="5" fill="#141414"/>
<rect x="107.5" y="848.5" width="13" height="11" fill="none" stroke="#aaa" stroke-width="1.2"/><rect x="110.5" y="851" width="7" height="6" fill="#777"/><rect x="113" y="853" width="2" height="2" fill="#fff"/>
<path d="M130,849 h14 M131,849 v13" stroke="#1ab0d0" stroke-width="1.3"/><path d="M135,858 q4,-3 8,0 q-4,3 -8,0z" fill="#ddd"/>
<rect x="150" y="847" width="16" height="14" fill="none" stroke="#a828c0" stroke-width="1.2"/><path d="M153,854 q1,-5 6,-4 q5,1 4,4 q-2,3 -6,2 l-3,2" fill="none" stroke="#f09020" stroke-width="1.5"/>
<rect x="175.5" y="853" width="9.5" height="7.5" fill="none" stroke="#e0a820" stroke-width="1.5"/><path d="M177,853 v-3 q3,-4 6,0 v3" fill="none" stroke="#aaa" stroke-width="1.2"/>
<rect x="191" y="843" width="21.5" height="21.5" fill="#2a2a2a"/><path d="M204,846 l-6,8 h4 l-3,8 l8,-10 h-4 l3,-6z" fill="#f0d848"/><path d="M211,859 v4 h-4z" fill="#ccc"/>
<circle cx="224" cy="854" r="6" fill="none" stroke="#ccc" stroke-width="1.3"/><path d="M219,854 h10 M224,849 v10" stroke="#ccc" stroke-width="1"/>
<rect x="239" y="851" width="15" height="10" fill="#ccc"/><circle cx="246" cy="856" r="2.8" fill="#888"/><path d="M251,845 l1.5,3 3,.3 -2.2,2 .6,3 -2.9,-1.5 -2.9,1.5 .6,-3 -2.2,-2 3,-.3z" fill="#f8d030"/>
<path d="M261,853 q7,-6 15,0 v6 h-15z" fill="#333"/>
<path d="M334,861 v-4 h4z" fill="#ccc" transform="rotate(180 336 859)"/>
<rect x="345" y="843" width="22" height="21.5" fill="#141414"/>
<g transform="translate(356,853.5)" fill="#ccc"><circle r="4"/><g><ellipse rx="2" ry="7"/><ellipse rx="2" ry="7" transform="rotate(45)"/><ellipse rx="2" ry="7" transform="rotate(90)"/><ellipse rx="2" ry="7" transform="rotate(135)"/></g></g><circle cx="356" cy="853.5" r="2.5" fill="#aaa"/>
<g transform="translate(378,853.5)" fill="#20b8e8"><g><ellipse rx="2.2" ry="7.5"/><ellipse rx="2.2" ry="7.5" transform="rotate(45)"/><ellipse rx="2.2" ry="7.5" transform="rotate(90)"/><ellipse rx="2.2" ry="7.5" transform="rotate(135)"/></g><circle r="2.3" fill="#f0d030"/></g>
<path d="M386,857 v4 h-4z" fill="#ccc"/>
<rect x="395" y="843" width="88" height="22" fill="#2e2e2e"/>
<text x="397" y="858" font-family="Liberation Sans" font-size="11" fill="#666">sRGB</text>
<rect x="484" y="843.5" width="13.5" height="21" fill="#383838"/><path d="M487,852 h8 l-4,4z" fill="#ccc"/>
</svg>
<!--/ST-->
<!--RP--><!-- right panels -->
<svg class="a" style="left:1390px;top:55px" width="530" height="820" viewBox="1390 55 530 820">
<rect x="1397" y="61" width="10" height="808" fill="#575757"/>
<rect x="1409" y="414" width="511" height="13" fill="#555"/>
<!-- tabs top -->
<rect x="1708.5" y="63.5" width="88" height="22" rx="2" fill="url(#tabg)" stroke="#5e5e5e"/>
<rect x="1797.5" y="66.5" width="49" height="19" fill="#484848" stroke="#5c5c5c"/>
<rect x="1847.5" y="66.5" width="34" height="19" fill="#484848" stroke="#5c5c5c"/>
<g font-family="Liberation Sans" font-size="11"><text x="1716" y="79" fill="#f0f0f0">Tool Properties</text><text x="1804" y="81" fill="#d0d0d0">Library</text><text x="1854" y="81" fill="#d0d0d0">Top</text></g>
<path d="M1885.0,74.5 h11 M1890.5,69.0 v11" stroke="#d8d8d8" stroke-width="3.2"/><path d="M1899.5,68.5 v12" stroke="#c8c8c8" stroke-width="1"/><path d="M1903.4,70.7 l7.6,7.6 M1911.0,70.7 l-7.6,7.6" stroke="#d8d8d8" stroke-width="3"/>
<!-- group boxes -->
<g fill="none" stroke="#6a6a6a" stroke-width="1"><path d="M1540,102.5 h364 q3.5,0 3.5,3.5 v53.5 q0,3.5 -3.5,3.5 h-481 q-3.5,0 -3.5,-3.5 v-51"/><path d="M1483.5,176.5 h420.5 q3.5,0 3.5,3.5 v53.5 q0,3.5 -3.5,3.5 h-481 q-3.5,0 -3.5,-3.5 v-51"/></g>
<g font-family="Liberation Sans" font-size="10.5" fill="#d0d0d0"><text x="1424" y="106.5">Contour Editor Options</text><text x="1424" y="180.5">Operations</text></g>
<!-- lasso -->
<ellipse cx="1452" cy="130" rx="9.5" ry="7" fill="none" stroke="#e8a030" stroke-width="1.8"/><path d="M1444,135 q-4,2 -2,5 q2,2 5,-3" fill="none" stroke="#e8a030" stroke-width="1.6"/>
<path d="M1464,143 v4 h-4z M1499,143 v4 h-4z M1571,143 v4 h-4z" fill="#ccc"/>
<!-- magnet -->
<path d="M1476,142 v-12 q0,-7 8.5,-7 q8.5,0 8.5,7 v12 h-5 v-12 q0,-3 -3.5,-3 q-3.5,0 -3.5,3 v12z" fill="#d4d4d4"/><rect x="1476" y="137.5" width="5" height="4.5" fill="#fff"/><rect x="1488" y="137.5" width="5" height="4.5" fill="#fff"/>
<path d="M1503.5,117.5 v30" stroke="#2a2a2a" stroke-width="1"/>
<rect x="1515.5" y="126" width="14" height="14" fill="none" stroke="#1a90e0" stroke-width="1" stroke-dasharray="0"/>
<g fill="#7cc8f0"><rect x="1514" y="124.5" width="3" height="3"/><rect x="1521" y="124.5" width="3" height="3"/><rect x="1528" y="124.5" width="3" height="3"/><rect x="1514" y="131.5" width="3" height="3"/><rect x="1528" y="131.5" width="3" height="3"/><rect x="1514" y="138.5" width="3" height="3"/><rect x="1521" y="138.5" width="3" height="3"/><rect x="1528" y="138.5" width="3" height="3"/></g>
<path d="M1547,146 v-12 q0,-10.5 10.5,-10.5 q10.5,0 10.5,10.5 v12z" fill="#000"/><path d="M1557.5,134 v12" stroke="#d02020" stroke-width="1"/><circle cx="1557.5" cy="134" r="1.6" fill="#e02020"/>
<path d="M1581,134 l6,-5 h14 l-6,5z M1581,138 l6,-5 h14 l-6,5z" fill="#a8dce8" stroke="#d8f0f8" stroke-width=".6"/><path d="M1590.5,129 v12 M1588,138.5 l2.5,3 2.5,-3" fill="none" stroke="#ccc" stroke-width="1"/>
<!-- operations -->
<path d="M1443,213 q-2,-8 5,-11 l6,-4 l3,3 l-4,6 q-4,7 -10,6z M1454,198 l4,-3" fill="none" stroke="#333" stroke-width="1.8"/>
<path d="M1468.5,191 v31" stroke="#2a2a2a" stroke-width="1"/>
<g fill="#1a9ae0"><ellipse cx="1484.5" cy="202" rx="4.5" ry="1.6"/><ellipse cx="1494" cy="202" rx="4.5" ry="1.6"/><ellipse cx="1484.5" cy="212" rx="4.5" ry="1.6"/><ellipse cx="1494" cy="212" rx="4.5" ry="1.6"/><ellipse cx="1518" cy="202" rx="4.5" ry="1.6"/><ellipse cx="1527.5" cy="202" rx="4.5" ry="1.6"/><ellipse cx="1518" cy="212" rx="4.5" ry="1.6"/><ellipse cx="1527.5" cy="212" rx="4.5" ry="1.6"/></g>
<path d="M1489.2,204 v5 M1487.5,207.5 l1.7,1.7 1.7,-1.7 M1522.7,204 v5 M1521,207.5 l1.7,1.7 1.7,-1.7" fill="none" stroke="#ddd" stroke-width="1"/>
<!-- splitter arrows right -->
<g stroke="#d4d4d4" fill="none"><path d="M1638.5,416.0 v10 M1661.7,416.0 v10 M1664.5,416.0 v10 M1687.5,416.0 v10" stroke-width="1.1"/><path d="M1644.0,423.5 l6,-6 l6,6 M1670.0,418.0 l6,6 l6,-6" stroke-width="2.8"/></g>
<!-- left strip arrows -->
<g stroke="#d0d0d0" fill="none"><path d="M1397,440 h10 M1397,467 h10 M1397,469.5 h10 M1397,488 h10" stroke-width="1"/><path d="M1405,447 l-5,5 l5,5 M1400,473 l5,5 l-5,5" stroke-width="2.2"/></g>
<!-- colour panel -->
<g fill="#d8d8d8"><rect x="1415" y="434" width="10" height="2"/><rect x="1415" y="438" width="10" height="2"/><rect x="1415" y="442" width="10" height="2"/></g><path d="M1428,444 v3 h-3z" fill="#ccc"/>
<rect x="1765.5" y="429.5" width="48" height="22" rx="2" fill="url(#tabg)" stroke="#5e5e5e"/>
<rect x="1814.5" y="432.5" width="66" height="19" fill="#484848" stroke="#5c5c5c"/>
<g font-family="Liberation Sans" font-size="11"><text x="1773" y="445" fill="#f0f0f0">Colour</text><text x="1821" y="447" fill="#d0d0d0">Node View</text></g>
<path d="M1885.0,440.5 h11 M1890.5,435.0 v11" stroke="#d8d8d8" stroke-width="3.2"/><path d="M1899.5,434.5 v12" stroke="#c8c8c8" stroke-width="1"/><path d="M1903.4,436.7 l7.6,7.6 M1911.0,436.7 l-7.6,7.6" stroke="#d8d8d8" stroke-width="3"/>
<path d="M1416,467 h11 l-5.5,6z" fill="#d0d0d0"/>
<text x="1430" y="474.5" font-family="Liberation Sans" font-size="11" fill="#d8d8d8">Palettes</text>
<g stroke="#3c3c3c" stroke-width="1.6" fill="none"><path d="M1685,470 h10 M1690,465 v10 M1714,470 h10"/><path d="M1743,466 h5 l1,1 h5 v8 h-11z" fill="#3c3c3c"/><path d="M1783,476 v-9 M1780,469 l3,-3 3,3 M1813,465 v9 M1810,472 l3,3 3,-3"/></g>
<path d="M1829.5,481 v-23 h23" fill="none" stroke="#1e1e1e" stroke-width="1.2"/>
<g stroke="#363636" stroke-width="1.4" fill="none"><circle cx="1841.5" cy="470" r="5.5"/><path d="M1864,476 l4,-10 q5,-2 6,3 q0,4 -4,4z M1893,467 q3,-4 7,-1 q3,3 -1,7 q-3,3 -6,-1z"/></g>
<rect x="1416" y="489" width="495" height="135" fill="#161616"/>
<rect x="1416" y="624" width="495" height="11" fill="#585858"/>
<g stroke="#d4d4d4" fill="none"><path d="M1638.5,625.0 v10 M1661.7,625.0 v10 M1664.5,625.0 v10 M1687.5,625.0 v10" stroke-width="1.1"/><path d="M1644.0,632.5 l6,-6 l6,6 M1670.0,627.0 l6,6 l6,-6" stroke-width="2.8"/></g>
<g stroke="#3c3c3c" stroke-width="1.5" fill="none"><path d="M1424,649 h10 M1429,644 v10 M1449,649 h10 M1473,650 h9 M1477.5,645.5 v9 M1479,647 l3,-4"/></g>
<path d="M1733,654 l8,-6 l2,2 l-7,6z" fill="#1a80d0"/><path d="M1741,648 l3,-3 l2,2 -3,3z" fill="#e89030"/>
<path d="M1784,654 l6,-8 l3,2 l-6,8z" fill="#e8a030"/>
<path d="M1830,648 v6 q5,3 10,0 v-6z" fill="#f0f0f0"/><ellipse cx="1835" cy="647" rx="5" ry="2.5" fill="#e02020"/><path d="M1830,647 v3 q3,1.5 5,-1 q2,2 5,0 v-2z" fill="#e02020"/>
<g fill="none" stroke="#303030" stroke-width="1"><path d="M1750.5,656.5 v-17 h17"/><path d="M1798.5,656.5 v-17 h17"/><path d="M1846.5,656.5 v-17 h17"/></g>
<g fill="#f0f0f0"><rect x="1754" y="643.5" width="11" height="11"/><rect x="1802" y="643.5" width="11" height="11"/><rect x="1850" y="643.5" width="11" height="11"/></g>
<path d="M1892,646 l2,-2 l3,3 M1900,652 l-2,2 l-3,-3 M1895,650 l3,-3" fill="none" stroke="#c8c8c8" stroke-width="1.1"/>
</svg>
<!--/RP-->
<!--TL--><!-- timeline -->
<svg class="a" style="left:0;top:868px" width="1920" height="150" viewBox="0 868 1920 150">
<rect x="34" y="869" width="1886" height="12" fill="#555"/>
<!-- splitter arrows -->
<g stroke="#d4d4d4" fill="none"><path d="M951.5,870.0 v10 M974.7,870.0 v10 M977.5,870.0 v10 M1000.5,870.0 v10" stroke-width="1.1"/><path d="M957.0,877.5 l6,-6 l6,6 M983.0,872.0 l6,6 l6,-6" stroke-width="2.8"/></g>

<rect x="34" y="881" width="1886" height="137" fill="#464646"/>
<path d="M35,1018 V882 H1918.5 V1018" fill="none" stroke="#e81010" stroke-width="1.6"/>
<g fill="#d8d8d8"><rect x="41" y="887" width="10" height="2"/><rect x="41" y="891" width="10" height="2"/><rect x="41" y="895" width="10" height="2"/></g><path d="M53,897 v3 h-3z" fill="#ccc"/>
<rect x="59" y="884" width="92" height="18" fill="#141414"/>
<text x="61.5" y="897.5" font-family="Liberation Sans" font-size="11" fill="#e6e6e6">Default (Display)</text>
<rect x="152.5" y="884.5" width="13" height="17" fill="#151515" stroke="#4a4a4a"/><path d="M155,891 h8 l-4,4z" fill="#ccc"/>
<g fill="url(#hg)" stroke="#111" stroke-width="1"><rect x="36.5" y="907.5" width="7" height="31.5"/><rect x="36.5" y="940.5" width="7" height="32"/></g>
<path d="M54,918 l14,5.5 l-14,5.5z" fill="#1a9ae8"/>
<path d="M86,917 l14,6 l-14,6z" fill="#1a9ae8"/><path d="M95,922 l1.7,3.4 3.8,.5 -2.8,2.6 .7,3.7 -3.4,-1.8 -3.4,1.8 .7,-3.7 -2.8,-2.6 3.8,-.5z" fill="#f8c828" stroke="#c89010" stroke-width=".5"/><path d="M107,933 v4 h-4z" fill="#ccc"/>
<path d="M120,924 a7.5,7.5 0 1,0 3,-6" fill="none" stroke="#1a9ae8" stroke-width="2.2"/><path d="M118,928 l4,4 l2,-5z" fill="#1a9ae8"/>
<path d="M150,920 h4 l6,-4 v15 l-6,-4 h-4z" fill="#1a9ae8"/><path d="M163,920 q2,3 0,6 M166,917.5 q4,5.5 0,11" fill="none" stroke="#1a9ae8" stroke-width="1.6"/>
<path d="M183,920 h4 l6,-4 v15 l-6,-4 h-4z" fill="#1a9ae8"/><text x="194" y="929" font-family="Liberation Sans" font-size="12" fill="#d8d8d8">S</text>
<rect x="214.5" y="911" width="83" height="7.5" fill="#141414"/><rect x="248" y="911" width="16.5" height="7.5" fill="#a8a8a8"/>
<rect x="214.5" y="923" width="83" height="11.5" fill="#9a9a9a"/><rect x="216" y="924.5" width="80" height="8.5" fill="#1a1a1a"/>
<rect x="217.5" y="925" width="1.6" height="7.5" fill="#c8c8c8"/><rect x="221.2" y="925" width="1.6" height="7.5" fill="#c8c8c8"/><rect x="225.0" y="925" width="1.6" height="7.5" fill="#c8c8c8"/><rect x="228.8" y="925" width="1.6" height="7.5" fill="#c8c8c8"/><rect x="232.5" y="925" width="1.6" height="7.5" fill="#c8c8c8"/><rect x="236.2" y="925" width="1.6" height="7.5" fill="#c8c8c8"/><rect x="240.0" y="925" width="1.6" height="7.5" fill="#c8c8c8"/><rect x="243.8" y="925" width="1.6" height="7.5" fill="#c8c8c8"/><rect x="247.5" y="925" width="1.6" height="7.5" fill="#c8c8c8"/><rect x="251.2" y="925" width="1.6" height="7.5" fill="#c8c8c8"/><rect x="255.0" y="925" width="1.6" height="7.5" fill="#c8c8c8"/><rect x="258.8" y="925" width="1.6" height="7.5" fill="#c8c8c8"/><rect x="262.5" y="925" width="1.6" height="7.5" fill="#c8c8c8"/><rect x="266.2" y="925" width="1.6" height="7.5" fill="#c8c8c8"/><rect x="270.0" y="925" width="1.6" height="7.5" fill="#c8c8c8"/><rect x="273.8" y="925" width="1.6" height="7.5" fill="#c8c8c8"/><rect x="277.5" y="925" width="1.6" height="7.5" fill="#c8c8c8"/><rect x="281.2" y="925" width="1.6" height="7.5" fill="#c8c8c8"/><rect x="285.0" y="925" width="1.6" height="7.5" fill="#c8c8c8"/><rect x="288.8" y="925" width="1.6" height="7.5" fill="#c8c8c8"/><rect x="292.5" y="925" width="1.6" height="7.5" fill="#c8c8c8"/>
<g font-family="Liberation Sans" font-size="12" fill="#d8d8d8"><text x="303" y="928.5">Frame</text><text x="412" y="928.5">Start</text><text x="517.5" y="928.5">Stop</text><text x="618" y="928.5">FPS</text></g>
<rect x="341" y="912" width="47" height="23" fill="#141414"/>
<text x="346" y="928.5" font-family="Liberation Sans" font-size="12" fill="#e6e6e6">1</text>
<rect x="389.5" y="912.5" width="14" height="10" fill="#151515" stroke="#4a4a4a"/><rect x="389.5" y="923.5" width="14" height="11" fill="#151515" stroke="#4a4a4a"/>
<path d="M392,920 l4,-4 4,4z M392,926 l4,4 4,-4z" fill="#ccc"/>
<rect x="446" y="912" width="47" height="23" fill="#141414"/>
<text x="451" y="928.5" font-family="Liberation Sans" font-size="12" fill="#e6e6e6">1</text>
<rect x="494.5" y="912.5" width="14" height="10" fill="#151515" stroke="#4a4a4a"/><rect x="494.5" y="923.5" width="14" height="11" fill="#151515" stroke="#4a4a4a"/>
<path d="M497,920 l4,-4 4,4z M497,926 l4,4 4,-4z" fill="#ccc"/>
<rect x="549" y="912" width="47" height="23" fill="#141414"/>
<text x="554" y="928.5" font-family="Liberation Sans" font-size="12" fill="#e6e6e6">12</text>
<rect x="597.5" y="912.5" width="14" height="10" fill="#151515" stroke="#4a4a4a"/><rect x="597.5" y="923.5" width="14" height="11" fill="#151515" stroke="#4a4a4a"/>
<path d="M600,920 l4,-4 4,4z M600,926 l4,4 4,-4z" fill="#ccc"/>
<rect x="644" y="912" width="52" height="23" fill="#141414"/><text x="650" y="928.5" font-family="Liberation Sans" font-size="12" fill="#e6e6e6">24</text>
<rect x="697.5" y="912.5" width="14" height="22" fill="#151515" stroke="#4a4a4a"/><path d="M700.5,921 h8 l-4,4z" fill="#ccc"/>
<rect x="45" y="944" width="28" height="24" fill="#2a2a2a"/><rect x="74" y="944.5" width="14" height="23" fill="#333"/><path d="M77,953 h8 l-4,4z" fill="#ccc"/>
<g fill="none" stroke="#3a3a3a" stroke-width="1.5"><path d="M98,959 h16 M106,962 v4 M111,958 q3,-3 2,-9"/><rect x="103" y="954.5" width="4.5" height="4.5"/><path d="M131,970 q-2,-14 8,-15 h6"/><rect x="145" y="952" width="4.5" height="4.5"/><circle cx="132" cy="955" r="1.2"/><rect x="163" y="952" width="4.5" height="4.5"/><path d="M168,955 h10 q5,2 4,15"/><path d="M197,959 h12 M201,962 v6 M208,956 q3,-3 2,-8"/><rect x="204" y="954.5" width="4.5" height="4.5"/><rect x="206" y="961.5" width="8" height="6"/><path d="M230,949 h12 l-8,9 h12 M228,958 h14 l-8,8 h10"/><rect x="262" y="950" width="17" height="14"/><path d="M262,950 l17,14 M279,950 l-17,14"/><rect x="296" y="951" width="14" height="14"/><path d="M310,948 l3,3 M298,959 h10"/></g>
<g fill="#3a3a3a"><circle cx="266" cy="949" r="3.5"/><circle cx="299" cy="949" r="3.5"/><circle cx="337" cy="948" r="3.5"/><circle cx="370" cy="948" r="3.5"/></g>
<g font-family="Liberation Sans" font-size="12" fill="#3a3a3a"><text x="329" y="966">KF</text><text x="362" y="966">KF</text><text x="462" y="966">KF</text><text x="495" y="966">KF</text></g>
<g fill="none" stroke="#3a3a3a" stroke-width="1.6"><path d="M396,963 q4,-1 6,-6 q2,-5 8,-6"/><circle cx="396" cy="963" r="1.8"/><circle cx="410" cy="951" r="1.8"/><path d="M429,956 h14"/><circle cx="429" cy="956" r="2"/><circle cx="443" cy="956" r="2"/><path d="M470,952 l-6,-3 6,-3z M497,946 l6,3 -6,3z" fill="#3a3a3a"/><rect x="528" y="958" width="14" height="5"/><rect x="561" y="958" width="14" height="5"/><circle cx="600" cy="956" r="7"/><rect x="592" y="954" width="16" height="4" fill="#3a3a3a"/><path d="M604,961 l3,4"/></g>
<g font-family="Liberation Sans" font-size="10" fill="#3a3a3a"><text x="529" y="955">K+</text><text x="562" y="955">K-</text></g>
<rect x="625" y="949.5" width="18" height="11" fill="none" stroke="#ddd" stroke-width="1.2"/><path d="M631,950 v10 M637,950 v10" stroke="#ddd" stroke-width="1"/><rect x="627" y="954" width="2" height="2" fill="#20c0e8"/><rect x="639" y="954" width="2" height="2" fill="#20c0e8"/>
<g fill="none" stroke="#3a3a3a" stroke-width="1.4"><rect x="657" y="950" width="6" height="12"/><rect x="669" y="950" width="6" height="12"/><path d="M664,946 h8 l-2,-2"/></g>
<rect x="684" y="940.5" width="33" height="32" fill="#141414"/><rect x="693.5" y="948.5" width="13" height="15" fill="#f0f0f0" stroke="#333"/><rect x="697.5" y="953" width="5" height="5" fill="#141414"/>
<rect x="725" y="948" width="16" height="16" fill="#1e1e1e" stroke="#555"/><rect x="731" y="954" width="4" height="4" fill="#ddd"/>
<rect x="758" y="948" width="16" height="16" fill="#1e1e1e" stroke="#555"/><rect x="761.5" y="950.5" width="9" height="11" fill="#f4f4f4"/>
<g font-family="Liberation Sans" font-size="9" fill="#d0d0d0"><text x="789" y="955">ABC+</text><text x="788" y="963">+ABC</text></g>
<rect x="36" y="973" width="1882" height="2" fill="#969696"/>
<rect x="36" y="975" width="585" height="23" fill="#464646"/>
<rect x="36" y="997.5" width="573" height="1.5" fill="#1e1e1e"/><rect x="37" y="999" width="572" height="1.3" fill="#7a7a7a"/>
<g fill="#2a2a2a"><rect x="142" y="975" width="1" height="23"/><rect x="322.5" y="975" width="1" height="23"/><rect x="503" y="975" width="1" height="23"/></g>
<rect x="609" y="975" width="12" height="43" fill="#4e4e4e" stroke="#2a2a2a" stroke-width="1"/>
<g font-family="Liberation Sans" font-size="10" fill="#c8c8c8"><text x="147" y="989">Layers</text><text x="329" y="989">Parameters</text><text x="510" y="989">Additional Links</text></g>
<path d="M43,989 q0,-6 3,-8 q1,3 1,8z M49,989 q0,-6 3,-8 q1,3 1,8z" fill="#e0e0e0"/>
<circle cx="60.5" cy="986" r="4.2" fill="#f0f0f0"/><circle cx="60.5" cy="986" r="2" fill="#111"/>
<g fill="#c8c8c8"><ellipse cx="75" cy="982" rx="4.5" ry="1.8"/><ellipse cx="75" cy="986" rx="4.5" ry="1.8"/><ellipse cx="75" cy="990" rx="4.5" ry="1.8"/></g>
<rect x="85.5" y="985" width="7" height="6" fill="#bbb"/><path d="M87,985 v-2 q2,-3 4,0 v2" fill="none" stroke="#bbb" stroke-width="1.2"/>
<rect x="97" y="980.5" width="11" height="11" fill="#fafafa" stroke="#222"/>
<rect x="113" y="981" width="9" height="10" fill="none" stroke="#5a5a5a"/><circle cx="117.5" cy="985" r="2" fill="#5a5a5a"/>
<path d="M254,986 h10 M259,981 v10" stroke="#e0e0e0" stroke-width="2"/><path d="M266,990 v3 h-3z" fill="#ccc"/><path d="M272,986 h9" stroke="#3a3a3a" stroke-width="1.6"/>
<g fill="#e0e0e0"><path d="M295,986 h7 M298.5,982.5 v7" stroke="#e0e0e0" stroke-width="1.8"/></g><circle cx="291" cy="982" r="1.2" fill="#20c0e8"/><circle cx="294" cy="980" r="1" fill="#f04040"/>
<path d="M308,991 q-1,-7 5,-9" fill="none" stroke="#f06020" stroke-width="1.4"/><circle cx="313" cy="982" r="1.6" fill="#fff"/><path d="M313,987 h7 M316.5,983.5 v7" stroke="#e0e0e0" stroke-width="1.8"/>
<rect x="36" y="1000.3" width="573" height="18" fill="#464646"/><rect x="36.5" y="973" width="1.2" height="45" fill="#7a7a7a"/>
<rect x="44.5" y="1003.5" width="12" height="10" fill="none" stroke="#bbb" stroke-width="1"/><ellipse cx="50.5" cy="1008.5" rx="4" ry="3" fill="#999"/>
<path d="M65,1012 h5 l6,-8" fill="none" stroke="#20b8d8" stroke-width="1.6"/><rect x="68" y="1008" width="4" height="4" fill="none" stroke="#20b8d8"/>
<path d="M82,1008.5 h10 M89,1005 l3.5,3.5 -3.5,3.5" fill="none" stroke="#20b8d8" stroke-width="1.8"/>
<defs><linearGradient id="sb" x1="0" y1="0" x2="0" y2="1"><stop offset="0" stop-color="#6a6a6a"/><stop offset="1" stop-color="#404040"/></linearGradient></defs>
<rect x="143" y="1001" width="179.5" height="15.5" fill="#3a3a3a" stroke="#2a2a2a"/><rect x="160" y="1001.5" width="146" height="14.5" fill="url(#sb)"/>
<path d="M154,1005 l-4,3.5 4,3.5z M312,1005 l4,3.5 -4,3.5z" fill="#bbb"/>
<rect x="322.5" y="1000" width="287" height="18" fill="#464646"/>
<rect x="621" y="975" width="1277" height="23" fill="#141414"/>
<rect x="621" y="975" width="170" height="23" fill="#464646"/>
<rect x="627" y="988" width="160" height="7" fill="#9a9a9a"/>
<rect x="634.0" y="989" width="1" height="5" fill="#d8d8d8"/>
<rect x="648.0" y="989" width="1" height="5" fill="#d8d8d8"/>
<rect x="662.0" y="989" width="1" height="5" fill="#d8d8d8"/>
<rect x="676.0" y="989" width="1" height="5" fill="#d8d8d8"/>
<rect x="690.0" y="989" width="1" height="5" fill="#d8d8d8"/>
<rect x="704.0" y="989" width="1" height="5" fill="#d8d8d8"/>
<rect x="718.0" y="989" width="1" height="5" fill="#d8d8d8"/>
<rect x="732.0" y="989" width="1" height="5" fill="#d8d8d8"/>
<rect x="746.0" y="989" width="1" height="5" fill="#d8d8d8"/>
<rect x="760.0" y="989" width="1" height="5" fill="#d8d8d8"/>
<rect x="774.0" y="989" width="1" height="5" fill="#d8d8d8"/>
<rect x="788.0" y="989" width="1" height="5" fill="#d8d8d8"/>
<rect x="747" y="989" width="14" height="5" fill="none" stroke="#666" stroke-width="1"/>
<rect x="802" y="991" width="1.5" height="4" fill="#e0e0e0"/><rect x="816" y="991" width="1.5" height="4" fill="#e0e0e0"/><rect x="830" y="991" width="1.5" height="4" fill="#e0e0e0"/><rect x="844" y="991" width="1.5" height="4" fill="#e0e0e0"/><rect x="858" y="991" width="1.5" height="4" fill="#e0e0e0"/><rect x="872" y="991" width="1.5" height="4" fill="#e0e0e0"/><rect x="886" y="991" width="1.5" height="4" fill="#e0e0e0"/><rect x="900" y="991" width="1.5" height="4" fill="#e0e0e0"/><rect x="914" y="991" width="1.5" height="4" fill="#e0e0e0"/><rect x="928" y="991" width="1.5" height="4" fill="#e0e0e0"/><rect x="942" y="991" width="1.5" height="4" fill="#e0e0e0"/><rect x="956" y="991" width="1.5" height="4" fill="#e0e0e0"/><rect x="970" y="991" width="1.5" height="4" fill="#e0e0e0"/><rect x="984" y="991" width="1.5" height="4" fill="#e0e0e0"/><rect x="998" y="991" width="1.5" height="4" fill="#e0e0e0"/><rect x="1012" y="991" width="1.5" height="4" fill="#e0e0e0"/><rect x="1026" y="991" width="1.5" height="4" fill="#e0e0e0"/><rect x="1040" y="991" width="1.5" height="4" fill="#e0e0e0"/><rect x="1054" y="991" width="1.5" height="4" fill="#e0e0e0"/><rect x="1068" y="991" width="1.5" height="4" fill="#e0e0e0"/><rect x="1082" y="991" width="1.5" height="4" fill="#e0e0e0"/><rect x="1096" y="991" width="1.5" height="4" fill="#e0e0e0"/><rect x="1110" y="991" width="1.5" height="4" fill="#e0e0e0"/><rect x="1124" y="991" width="1.5" height="4" fill="#e0e0e0"/><rect x="1138" y="991" width="1.5" height="4" fill="#e0e0e0"/><rect x="1152" y="991" width="1.5" height="4" fill="#e0e0e0"/><rect x="1166" y="991" width="1.5" height="4" fill="#e0e0e0"/><rect x="1180" y="991" width="1.5" height="4" fill="#e0e0e0"/><rect x="1194" y="991" width="1.5" height="4" fill="#e0e0e0"/><rect x="1208" y="991" width="1.5" height="4" fill="#e0e0e0"/><rect x="1222" y="991" width="1.5" height="4" fill="#e0e0e0"/><rect x="1236" y="991" width="1.5" height="4" fill="#e0e0e0"/><rect x="1250" y="991" width="1.5" height="4" fill="#e0e0e0"/><rect x="1264" y="991" width="1.5" height="4" fill="#e0e0e0"/><rect x="1278" y="991" width="1.5" height="4" fill="#e0e0e0"/><rect x="1292" y="991" width="1.5" height="4" fill="#e0e0e0"/><rect x="1306" y="991" width="1.5" height="4" fill="#e0e0e0"/><rect x="1320" y="991" width="1.5" height="4" fill="#e0e0e0"/><rect x="1334" y="991" width="1.5" height="4" fill="#e0e0e0"/><rect x="1348" y="991" width="1.5" height="4" fill="#e0e0e0"/><rect x="1362" y="991" width="1.5" height="4" fill="#e0e0e0"/><rect x="1376" y="991" width="1.5" height="4" fill="#e0e0e0"/><rect x="1390" y="991" width="1.5" height="4" fill="#e0e0e0"/><rect x="1404" y="991" width="1.5" height="4" fill="#e0e0e0"/><rect x="1418" y="991" width="1.5" height="4" fill="#e0e0e0"/><rect x="1432" y="991" width="1.5" height="4" fill="#e0e0e0"/><rect x="1446" y="991" width="1.5" height="4" fill="#e0e0e0"/><rect x="1460" y="991" width="1.5" height="4" fill="#e0e0e0"/><rect x="1474" y="991" width="1.5" height="4" fill="#e0e0e0"/><rect x="1488" y="991" width="1.5" height="4" fill="#e0e0e0"/><rect x="1502" y="991" width="1.5" height="4" fill="#e0e0e0"/><rect x="1516" y="991" width="1.5" height="4" fill="#e0e0e0"/><rect x="1530" y="991" width="1.5" height="4" fill="#e0e0e0"/><rect x="1544" y="991" width="1.5" height="4" fill="#e0e0e0"/><rect x="1558" y="991" width="1.5" height="4" fill="#e0e0e0"/><rect x="1572" y="991" width="1.5" height="4" fill="#e0e0e0"/><rect x="1586" y="991" width="1.5" height="4" fill="#e0e0e0"/><rect x="1600" y="991" width="1.5" height="4" fill="#e0e0e0"/><rect x="1614" y="991" width="1.5" height="4" fill="#e0e0e0"/><rect x="1628" y="991" width="1.5" height="4" fill="#e0e0e0"/><rect x="1642" y="991" width="1.5" height="4" fill="#e0e0e0"/><rect x="1656" y="991" width="1.5" height="4" fill="#e0e0e0"/><rect x="1670" y="991" width="1.5" height="4" fill="#e0e0e0"/><rect x="1684" y="991" width="1.5" height="4" fill="#e0e0e0"/><rect x="1698" y="991" width="1.5" height="4" fill="#e0e0e0"/><rect x="1712" y="991" width="1.5" height="4" fill="#e0e0e0"/><rect x="1726" y="991" width="1.5" height="4" fill="#e0e0e0"/><rect x="1740" y="991" width="1.5" height="4" fill="#e0e0e0"/><rect x="1754" y="991" width="1.5" height="4" fill="#e0e0e0"/><rect x="1768" y="991" width="1.5" height="4" fill="#e0e0e0"/><rect x="1782" y="991" width="1.5" height="4" fill="#e0e0e0"/><rect x="1796" y="991" width="1.5" height="4" fill="#e0e0e0"/><rect x="1810" y="991" width="1.5" height="4" fill="#e0e0e0"/><rect x="1824" y="991" width="1.5" height="4" fill="#e0e0e0"/><rect x="1838" y="991" width="1.5" height="4" fill="#e0e0e0"/><rect x="1852" y="991" width="1.5" height="4" fill="#e0e0e0"/><rect x="1866" y="991" width="1.5" height="4" fill="#e0e0e0"/><rect x="1880" y="991" width="1.5" height="4" fill="#e0e0e0"/><rect x="1894" y="991" width="1.5" height="4" fill="#e0e0e0"/>
<g font-family="Liberation Sans" font-size="10" fill="#e0e0e0"><text x="754" y="988" text-anchor="middle">10</text><text x="894" y="988" text-anchor="middle">20</text><text x="1034" y="988" text-anchor="middle">30</text><text x="1174" y="988" text-anchor="middle">40</text><text x="1314" y="988" text-anchor="middle">50</text><text x="1454" y="988" text-anchor="middle">60</text><text x="1594" y="988" text-anchor="middle">70</text><text x="1734" y="988" text-anchor="middle">80</text><text x="1874" y="988" text-anchor="middle">90</text></g>
<path d="M624,975 h7 v12 l-3.5,4 l-3.5,-4z" fill="#e01010"/><path d="M627.5,990 v10" stroke="#e01010" stroke-width="1"/><path d="M621,988 l4,-1 v9 h-4z" fill="#000"/>
<path d="M784,974.5 h10 v23.5 h-6 v-18 h-4z" fill="#e01010"/><path d="M788,990 l6,6 v2 h-6z" fill="#000"/>
<rect x="1898" y="975" width="17" height="23" fill="#464646" stroke="#6a6a6a"/><path d="M1906.5,979 v15 M1904,982 l-3,4.5 3,4.5 M1909,982 l3,4.5 -3,4.5 M1901,986.5 h3 M1909,986.5 h3" fill="none" stroke="#e0e0e0" stroke-width="1.4"/>
<rect x="621" y="998" width="1297" height="2" fill="#2a2a2a"/>
<rect x="621" y="1000" width="82" height="18" fill="#464646"/>
<circle cx="631" cy="1006" r="3.2" fill="#a8e8f8" stroke="#2ab8e0"/><path d="M633,1009 l3,4" stroke="#e8a030" stroke-width="2"/>
<path d="M646,1010 h51" stroke="#888" stroke-width="1"/><rect x="658" y="1003.5" width="4" height="10" fill="#888"/>
<rect x="703.5" y="1001" width="1212" height="16" fill="#2e2e2e" stroke="#222"/>
<rect x="719" y="1001.5" width="1148" height="15" fill="url(#sb)"/>
<rect x="1867" y="1001.5" width="32" height="15" fill="#1a1a1a"/>
<path d="M713,1005 l-4,3.5 4,3.5z M1906,1005 l4,3.5 -4,3.5z" fill="#bbb"/>
<rect x="1747.5" y="883.5" width="55" height="22" rx="2" fill="url(#tabg)" stroke="#5e5e5e"/><rect x="1803.5" y="886.5" width="77" height="19" fill="#484848" stroke="#5c5c5c"/>
<g font-family="Liberation Sans" font-size="11"><text x="1755" y="899" fill="#f0f0f0">Timeline</text><text x="1810" y="901" fill="#d0d0d0">Node Library</text></g>
<path d="M1885.0,894.5 h11 M1890.5,889.0 v11" stroke="#d8d8d8" stroke-width="3.2"/><path d="M1899.5,888.5 v12" stroke="#c8c8c8" stroke-width="1"/><path d="M1903.4,890.7 l7.6,7.6 M1911.0,890.7 l-7.6,7.6" stroke="#d8d8d8" stroke-width="3"/><path d="M1899,889 v11" stroke="#aaa" stroke-width="1"/><path d="M1902,890 l9,9 M1911,890 l-9,9" stroke="#e0e0e0" stroke-width="3"/>
<text x="1540" y="946" font-family="Liberation Sans" font-size="19.5" fill="#8c8c8c">Windows'u Etkinleştir</text>
<text x="1540" y="967.5" font-family="Liberation Sans" font-size="15" fill="#8c8c8c">Windows'u etkinleştirmek için Ayarlar'a gidin.</text>
</svg><!--/TL-->
</body></html>
